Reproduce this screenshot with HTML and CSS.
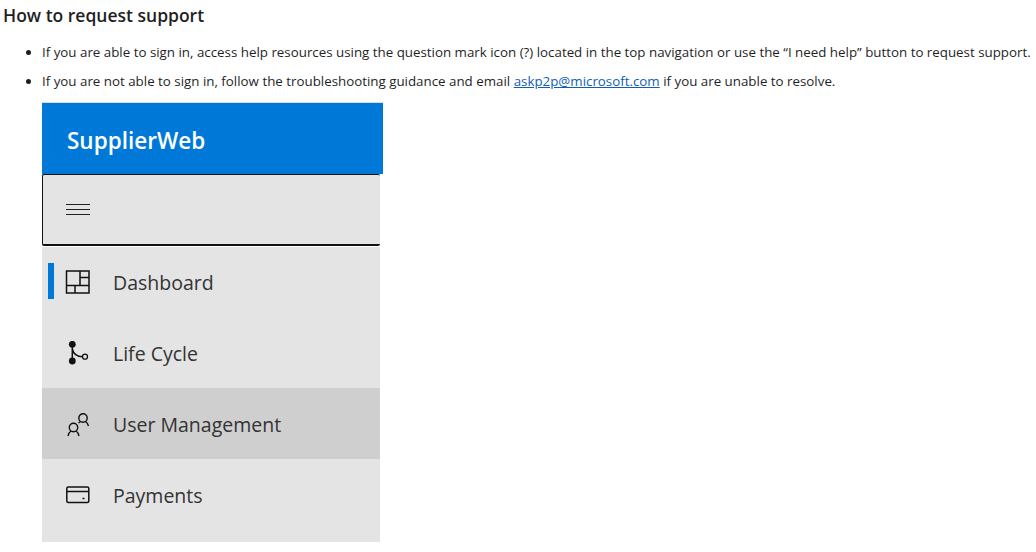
FILE: index.html
```html
<!DOCTYPE html>
<html lang="en">
<head>
    <meta charset="UTF-8">
    <meta name="viewport" content="width=device-width, initial-scale=1.0">
    <title>How to request support</title>
    <link rel="stylesheet" href="styles.css">
</head>
<body>
    <h2 class="title">How to request support</h2>
    <ul class="help-list">
        <li>If you are able to sign in, access help resources using the question mark icon (?) located in the top navigation or use the “I need help” button to request support.</li>
        <li>If you are not able to sign in, follow the troubleshooting guidance and email <a href="#">askp2p@microsoft.com</a> if you are unable to resolve.</li>
    </ul>

    <div class="shot">
        <div class="brand">SupplierWeb</div>
        <div class="toggle">
            <svg class="burger" width="26" height="14" viewBox="0 0 26 14">
                <path d="M1 2.500H25M1 7.500H25M1 12.500H25" stroke="#222" stroke-width="1" fill="none"/>
            </svg>
        </div>
        <nav class="menu">
            <div class="item active">
                <span class="marker"></span>
                <svg class="icon" width="26" height="26" viewBox="0 0 26 26">
                    <path d="M1.500 1H24V23H1.500ZM1.500 15.500H24M15 1V15.500M15 7.500H24M10 15.500V23" fill="none" stroke="#111" stroke-width="1.500"/>
                </svg>
                <span>Dashboard</span>
            </div>
            <div class="item">
                <svg class="icon" width="26" height="26" viewBox="0 0 26 26">
                    <circle cx="7.300" cy="3.300" r="3.400" fill="#111"/>
                    <circle cx="7.300" cy="20" r="3.400" fill="#111"/>
                    <circle cx="20" cy="15.700" r="2.500" fill="none" stroke="#111" stroke-width="1.300"/>
                    <path d="M7.300 4V19M7.300 8C8.500 13 12 15.700 17.500 15.700" fill="none" stroke="#111" stroke-width="1.500"/>
                </svg>
                <span>Life Cycle</span>
            </div>
            <div class="item hover">
                <svg class="icon" width="26" height="26" viewBox="0 0 26 26">
                    <g fill="none" stroke="#111" stroke-width="1.400">
                        <circle cx="8.500" cy="15.500" r="4.200"/>
                        <path d="M3 24C3.500 21.500 4.500 20 6 19M14 24C13.500 21.500 12.500 20 11 19"/>
                        <circle cx="18" cy="6" r="4.200"/>
                        <path d="M23.500 14C23 12 22 10.500 20.500 9.500M13.500 11C14 10.500 15 10 15.500 9.500"/>
                    </g>
                </svg>
                <span>User Management</span>
            </div>
            <div class="item last">
                <svg class="icon" width="26" height="26" viewBox="0 0 26 26">
                    <rect x="1.800" y="5" width="22" height="15.500" rx="1.500" fill="none" stroke="#111" stroke-width="1.500"/>
                    <path d="M2 9.500H24" stroke="#111" stroke-width="1.500"/>
                    <path d="M17.500 16.500H19.500" stroke="#111" stroke-width="1.500"/>
                </svg>
                <span>Payments</span>
            </div>
        </nav>
    </div>
</body>
</html>
```

FILE: styles.css
```css
body {
    margin: 0;
    background-color: #fff;
    color: #1f1f1f;
    font-family: "Open Sans", Arial, sans-serif;
}

.title {
    margin: 0;
    padding: 4px 0 0 3px;
    height: 30px;
    box-sizing: border-box;
    font-size: 17.5px;
    line-height: 22px;
    font-weight: 600;
}

.help-list {
    margin: 0;
    padding: 14px 0 0 42px;
    font-size: 13.34px;
    line-height: 17px;
    white-space: nowrap;
}

.help-list li {
    margin-bottom: 12px;
}

.help-list a {
    color: #0f5fb5;
}

.shot {
    width: 341px;
    margin-left: 42px;
    border-top: 1px solid #dcdcdc;
}

.brand {
    height: 71px;
    box-sizing: border-box;
    padding: 3px 0 0 25px;
    display: flex;
    align-items: center;
    background-color: #0078d7;
    color: #fff;
    font-size: 22.5px;
    font-weight: 600;
}

.toggle {
    width: 338px;
    height: 72px;
    box-sizing: border-box;
    display: flex;
    align-items: center;
    padding: 0 0 2px 22px;
    background-color: #e4e4e4;
    border: 1px solid #111;
    border-right: none;
    border-bottom-width: 2px;
    border-radius: 2px;
}

.menu {
    width: 338px;
    margin-top: 1px;
    background-color: #e4e4e4;
}

.item {
    height: 71px;
    box-sizing: border-box;
    position: relative;
    display: flex;
    align-items: center;
    gap: 22px;
    padding: 2px 0 0 23px;
    font-size: 19.5px;
    color: #333;
}

.item.active {
    height: 70px;
    padding-top: 1px;
}

.item.hover {
    background-color: #cfcfcf;
}

.item.last {
    height: 83px;
    align-items: flex-start;
    padding-top: 23px;
}

.marker {
    position: absolute;
    left: 6px;
    top: 16px;
    width: 6px;
    height: 36px;
    background-color: #0078d7;
}

.icon {
    flex: none;
}
```
